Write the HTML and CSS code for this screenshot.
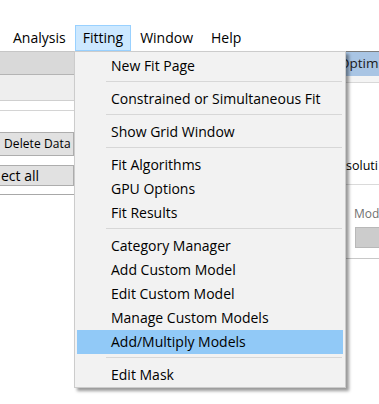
FILE: index.html
```html
<!DOCTYPE html>
<html>
<head>
<meta charset="utf-8">
<link rel="stylesheet" href="styles.css">
</head>
<body>
<div class="screen">
  <div class="titlebar"></div>
  <div class="menubar">
    <span class="mb-item">Analysis</span>
    <span class="mb-item active">Fitting</span>
    <span class="mb-item">Window</span>
    <span class="mb-item">Help</span>
  </div>
  <div class="workspace">
    <div class="left">
      <div class="tabbar"></div>
      <div class="strip"></div>
      <div class="thin"></div>
      <div class="btn-area">
        <div class="btn btn-delete">Delete Data</div>
        <div class="btn btn-select">ect all</div>
      </div>
      <div class="rule"></div>
      <div class="fill">
        <div class="grid-lines">
          <div class="gl gl-a"></div>
          <div class="gl gl-b"></div>
          <div class="gl gl-c"></div>
          <div class="gl gl-d"></div>
          <div class="gl gl-e"></div>
          <div class="gl gl-f"></div>
        </div>
      </div>
    </div>
    <div class="right">
      <div class="rp-header">Optim</div>
      <div class="rp-sub"></div>
      <div class="rp-res">soluti</div>
      <div class="rp-mod">Mod</div>
      <div class="rp-box"></div>
      <div class="rp-line"></div>
    </div>
  </div>
  <div class="menu">
    <div class="mi">New Fit Page</div>
    <div class="sep"></div>
    <div class="mi">Constrained or Simultaneous Fit</div>
    <div class="sep"></div>
    <div class="mi">Show Grid Window</div>
    <div class="sep"></div>
    <div class="mi">Fit Algorithms</div>
    <div class="mi">GPU Options</div>
    <div class="mi">Fit Results</div>
    <div class="sep"></div>
    <div class="mi">Category Manager</div>
    <div class="mi">Add Custom Model</div>
    <div class="mi">Edit Custom Model</div>
    <div class="mi">Manage Custom Models</div>
    <div class="mi hl">Add/Multiply Models</div>
    <div class="sep"></div>
    <div class="mi">Edit Mask</div>
  </div>
</div>
</body>
</html>
```

FILE: styles.css
```css
* { box-sizing: border-box; }
html, body { margin: 0; padding: 0; background: #ffffff; }
body {
  font-family: "Open Sans", "Noto Sans", "DejaVu Sans", sans-serif;
  font-size: 14px;
  color: #000;
}
.screen {
  position: relative;
  width: 379px;
  height: 404px;
  overflow: hidden;
  display: flex;
  flex-direction: column;
  background: #fff;
}
.titlebar { height: 25px; background: #fff; }
.menubar {
  height: 26px;
  display: flex;
  padding-left: 5px;
  background: #fff;
}
.mb-item {
  padding: 0 8px;
  line-height: 24px;
  border: 1px solid transparent;
  white-space: nowrap;
}
.mb-item:first-child { padding-left: 7px; padding-right: 8px; }
.mb-item.active {
  padding: 0 7px;
  background: #cce8ff;
  border-color: #99d1ff;
}
.workspace {
  flex: 1;
  display: flex;
  min-height: 0;
}
.left {
  width: 334px;
  display: flex;
  flex-direction: column;
}
.tabbar {
  height: 24px;
  background: #d9d9d9;
  border-top: 1px solid #c6c6c6;
  border-bottom: 1px solid #b4b4b4;
}
.strip {
  height: 26px;
  background: #eeeeee;
  border-bottom: 1px solid #cfcfcf;
}
.thin {
  height: 10px;
  background: #fff;
  border-bottom: 1px solid #d4d4d4;
}
.btn-area {
  padding-top: 21px;
  display: flex;
  flex-direction: column;
  gap: 9px;
}
.btn {
  width: 75px;
  margin-left: -1px;
  background: #e1e1e1;
  border: 1px solid #adadad;
  white-space: nowrap;
}
.btn-delete { height: 24px; line-height: 22px; padding-left: 4px; font-size: 12px; letter-spacing: 0.1px; }
.btn-select { height: 21px; line-height: 19px; padding-left: 1px; font-size: 14px; }
.rule {
  margin-top: 8px;
  height: 1px;
  background: #a8a8a8;
  width: 80px;
}
.fill {
  flex: 1;
  display: flex;
  align-items: flex-end;
}
.grid-lines {
  height: 60px;
  margin-left: 119px;
  display: flex;
  align-self: stretch;
  align-items: stretch;
  margin-top: 120px;
}
.gl { height: 100%; }
.gl-a { width: 13px; border-left: 1px solid #8a8a8a; }
.gl-b { width: 9px; background: #ededed; border-left: 1px solid #d6d6d6; }
.gl-c { width: 8px; background: #bcd3ea; border-left: 1px solid #111; }
.gl-d { width: 14px; }
.gl-e { width: 14px; border-left: 1px solid #a0a0a0; }
.gl-f { width: 10px; border-left: 1px solid #a0a0a0; }
.right {
  flex: 1;
  display: flex;
  flex-direction: column;
  min-width: 0;
  white-space: nowrap;
  font-size: 12.5px;
}
.rp-header {
  height: 25px;
  background: #a9c5e4;
  border-top: 1px solid #7d7d7d;
  line-height: 23px;
  padding-left: 5px;
  font-size: 13.5px;
  color: #1a1a1a;
}
.rp-sub {
  height: 7px;
  background: #f4f4f4;
  border-bottom: 1px solid #d8d8d8;
}
.rp-res {
  margin-top: 71px;
  height: 31px;
  line-height: 24px;
  padding-left: 12px;
  border-bottom: 1px solid #dadada;
}
.rp-mod {
  margin-top: 17px;
  height: 24px;
  line-height: 24px;
  padding-left: 20px;
  font-size: 12px;
  color: #707070;
}
.rp-box {
  margin-top: 1px;
  margin-left: 21px;
  height: 21px;
  background: #cccccc;
  border: 1px solid #b8b8b8;
  border-right: none;
}
.rp-line {
  margin-top: 10px;
  height: 1px;
  background: #c8c8c8;
}
.menu {
  position: absolute;
  left: 74px;
  top: 51px;
  width: 272px;
  background: #f2f2f2;
  border: 1px solid #cccccc;
  padding: 2px 2px 0 2px;
  box-shadow: 3px 3px 3px rgba(0, 0, 0, 0.4);
  z-index: 10;
}
.mi {
  height: 24px;
  line-height: 24px;
  padding-left: 34px;
  white-space: nowrap;
}
.mi.hl { background: #91c9f7; }
.sep {
  height: 9px;
  padding-top: 3px;
  margin-left: 29px;
  margin-right: 1px;
}
.sep::before {
  content: "";
  display: block;
  height: 1px;
  background: #d7d7d7;
}
```
